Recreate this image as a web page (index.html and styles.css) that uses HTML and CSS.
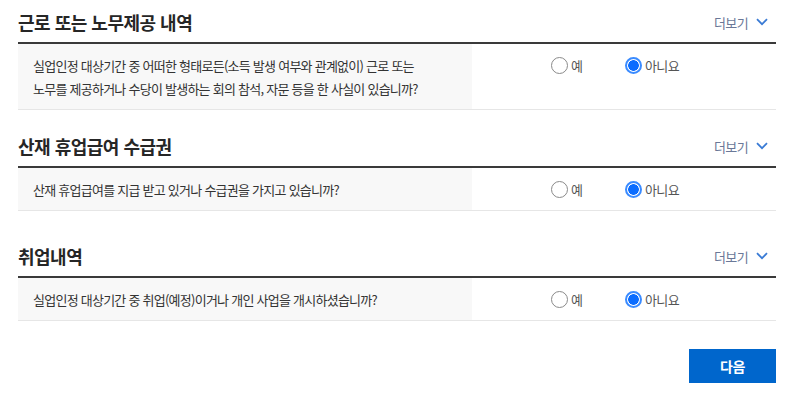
FILE: index.html
```html
<!DOCTYPE html>
<html lang="ko">
<head>
<meta charset="utf-8">
<title>실업인정</title>
<link rel="stylesheet" href="styles.css">
</head>
<body>
<div class="page">
  <section class="sec">
    <div class="sec-head">
      <h2 class="sec-title">근로 또는 노무제공 내역</h2>
      <span class="more">더보기<svg class="chev" width="12" height="8" viewBox="0 0 12 8"><path d="M1 1.2 L6 6.2 L11 1.2" fill="none" stroke="#3a7bd5" stroke-width="1.8"/></svg></span>
    </div>
    <div class="row">
      <div class="q">실업인정 대상기간 중 어떠한 형태로든(소득 발생 여부와 관계없이) 근로 또는<br>노무를 제공하거나 수당이 발생하는 회의 참석, 자문 등을 한 사실이 있습니까?</div>
      <div class="opts">
        <span class="opt"><span class="radio"></span>예</span>
        <span class="opt"><span class="radio on"></span>아니요</span>
      </div>
    </div>
  </section>
  <section class="sec sec-2">
    <div class="sec-head">
      <h2 class="sec-title">산재 휴업급여 수급권</h2>
      <span class="more">더보기<svg class="chev" width="12" height="8" viewBox="0 0 12 8"><path d="M1 1.2 L6 6.2 L11 1.2" fill="none" stroke="#3a7bd5" stroke-width="1.8"/></svg></span>
    </div>
    <div class="row">
      <div class="q">산재 휴업급여를 지급 받고 있거나 수급권을 가지고 있습니까?</div>
      <div class="opts">
        <span class="opt"><span class="radio"></span>예</span>
        <span class="opt"><span class="radio on"></span>아니요</span>
      </div>
    </div>
  </section>
  <section class="sec sec-3">
    <div class="sec-head">
      <h2 class="sec-title">취업내역</h2>
      <span class="more">더보기<svg class="chev" width="12" height="8" viewBox="0 0 12 8"><path d="M1 1.2 L6 6.2 L11 1.2" fill="none" stroke="#3a7bd5" stroke-width="1.8"/></svg></span>
    </div>
    <div class="row">
      <div class="q">실업인정 대상기간 중 취업(예정)이거나 개인 사업을 개시하셨습니까?</div>
      <div class="opts">
        <span class="opt"><span class="radio"></span>예</span>
        <span class="opt"><span class="radio on"></span>아니요</span>
      </div>
    </div>
  </section>
  <div class="actions">
    <button class="next" type="button">다음</button>
  </div>
</div>
</body>
</html>
```

FILE: styles.css
```css
* { box-sizing: border-box; }
html, body { margin: 0; padding: 0; background: #fff; }
body {
  font-family: "Noto Sans CJK KR", "Noto Sans", sans-serif;
  color: #333;
}
.page {
  width: 758px;
  margin-left: 18px;
}
.sec-2 { margin-top: 14px; }
.sec-3 { margin-top: 23px; }
.sec-head {
  display: flex;
  align-items: center;
  justify-content: space-between;
  height: 44px;
  padding-top: 9px;
  padding-bottom: 7px;
  border-bottom: 2px solid #3a3a3a;
}
.sec-title {
  margin: 0;
  font-size: 18px;
  line-height: 26px;
  font-weight: 700;
  letter-spacing: -0.5px;
  color: #262626;
}
.more {
  display: flex;
  align-items: center;
  gap: 8px;
  margin-right: 8px;
  font-size: 13px;
  letter-spacing: -0.6px;
  color: #6a7898;
}
.chev { display: block; }
.row {
  display: grid;
  grid-template-columns: 454px 1fr;
  border-bottom: 1px solid #e6e6e6;
}
.q {
  background: #f8f8f8;
  padding: 10px 0 9px 15px;
  font-size: 13px;
  line-height: 23px;
  letter-spacing: -0.75px;
  color: #333;
}
.opts {
  display: flex;
  align-items: flex-start;
  padding: 10px 0 0 79px;
}
.opt {
  display: flex;
  align-items: center;
  width: 74px;
  height: 23px;
  gap: 3px;
  font-size: 13px;
  letter-spacing: -0.6px;
  color: #555;
}
.radio {
  width: 17px;
  height: 17px;
  border-radius: 50%;
  border: 1px solid #8a8a8a;
  background: #fff;
  flex: none;
}
.radio.on {
  border: 2px solid #3a8bff;
  background: radial-gradient(circle, #0a6cff 0 5px, #fff 5.6px);
}
.actions {
  display: flex;
  justify-content: flex-end;
  margin-top: 28px;
}
.next {
  width: 87px;
  height: 34px;
  border: none;
  background: #0066cc;
  color: #fff;
  font-family: "Noto Sans CJK KR", "Noto Sans", sans-serif;
  font-size: 14px;
  font-weight: 700;
  letter-spacing: -0.5px;
  cursor: pointer;
}
```
